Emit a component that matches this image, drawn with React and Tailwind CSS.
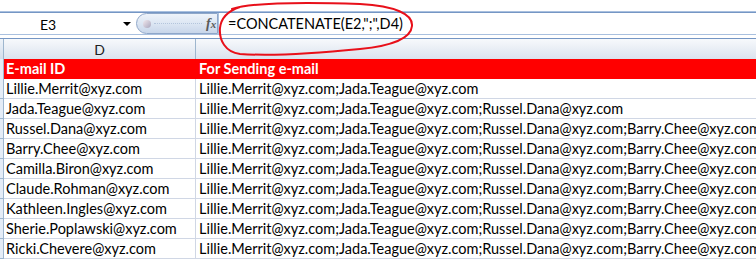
import React from "react";

const names = [
  "Lillie.Merrit@xyz.com",
  "Jada.Teague@xyz.com",
  "Russel.Dana@xyz.com",
  "Barry.Chee@xyz.com",
  "Camilla.Biron@xyz.com",
  "Claude.Rohman@xyz.com",
  "Kathleen.Ingles@xyz.com",
  "Sherie.Poplawski@xyz.com",
  "Ricki.Chevere@xyz.com",
  "Annie.Lowe@xyz.com",
];

const font = { fontFamily: "Lato, 'Open Sans', sans-serif" };

export default function App() {
  const rows = names.slice(0, 9).map((n, i) => ({
    d: n,
    e: names.slice(0, i + 2).join(";"),
  }));
  return (
    <div
      className="relative w-[756px] h-[260px] overflow-hidden bg-white text-black"
      style={font}
    >
      <div className="h-[11px] bg-white" />
      <div className="h-px bg-[#a9c0df]" />
      <div className="h-px bg-[#7596c4]" />
      {/* formula bar */}
      <div className="flex h-[21px] items-stretch">
        <div className="relative flex w-[136px] items-center pt-[2px]">
          <div className="w-[96px] text-center text-[14px] leading-none">E3</div>
          <div className="absolute left-[123px] top-[9px] h-0 w-0 border-l-[4px] border-r-[4px] border-t-[4px] border-l-transparent border-r-transparent border-t-black" />
        </div>
        <div className="relative flex w-[82px] items-center rounded-l-full border border-[#8fa7c9] bg-gradient-to-b from-[#eef3fa] via-[#dce6f3] to-[#c8d6ea]">
          <div className="ml-[6px] h-[8px] w-[8px] rounded-full bg-gradient-to-br from-[#f2e9ee] to-[#a9a6bd]" />
          <div className="ml-[3px] h-px w-[48px] border-t border-dotted border-[#b4c5dc]" />
          <span
            className="ml-[4px] text-[14px] font-bold italic leading-none text-[#5a5a5a]"
            style={{ fontFamily: "'Liberation Serif', serif" }}
          >
            f<span className="text-[11px]">x</span>
          </span>
        </div>
        <div className="flex flex-1 items-center border-l border-[#a9c0df] pl-[9px] pt-[2px] text-[14.5px] leading-none">
          =CONCATENATE(E2,";",D4)
        </div>
      </div>
      <div className="h-px bg-[#a9c0df]" />
      <div className="h-[3px] bg-white" />
      {/* column header */}
      <div className="flex h-[21px] border-t border-[#7596c4] bg-gradient-to-b from-[#f7f9fc] to-[#dbe3ee]">
        <div className="w-[4px] border-r border-[#9eb6ce] bg-gradient-to-b from-[#eef3f9] to-[#d3deec]" />
        <div className="flex w-[192px] items-center justify-center border-r border-[#9eb6ce] text-[14px] text-[#222]">
          D
        </div>
        <div className="flex-1" />
      </div>
      {/* red header row */}
      <div className="flex h-[20px]">
        <div className="w-[4px] border-r border-[#9eb6ce] bg-[#e4ecf7]" />
        <div className="flex flex-1 items-center bg-[#ff0000] text-[14.5px] font-bold text-white">
          <div className="w-[192px] pl-[2px]">E-mail ID</div>
          <div className="pl-[3px]">For Sending e-mail</div>
        </div>
      </div>
      {rows.map((r, i) => (
        <div key={i} className="flex h-[20px]">
          <div className="w-[4px] border-b border-r border-[#9eb6ce] bg-[#e4ecf7]" />
          <div className="flex w-[192px] items-center whitespace-nowrap border-b border-r border-[#d0d7e5] pl-[2px] text-[14.5px]">
            {r.d}
          </div>
          <div className="flex flex-1 items-center overflow-hidden whitespace-nowrap border-b border-[#d0d7e5] pl-[3px] text-[14.5px]">
            {r.e}
          </div>
        </div>
      ))}
      <svg
        className="pointer-events-none absolute left-0 top-0"
        width="756"
        height="260"
        viewBox="0 0 756 260"
      >
        <path
          d="M232 9 C250 3 300 2 360 4 C395 6 413 14 412 26 C411 38 392 46 360 49 C320 53 270 56 240 54 C225 52 219 40 220 28 C221 18 228 11 240 7"
          fill="none"
          stroke="#e8101a"
          strokeWidth="2"
          strokeLinecap="round"
        />
      </svg>
    </div>
  );
}
